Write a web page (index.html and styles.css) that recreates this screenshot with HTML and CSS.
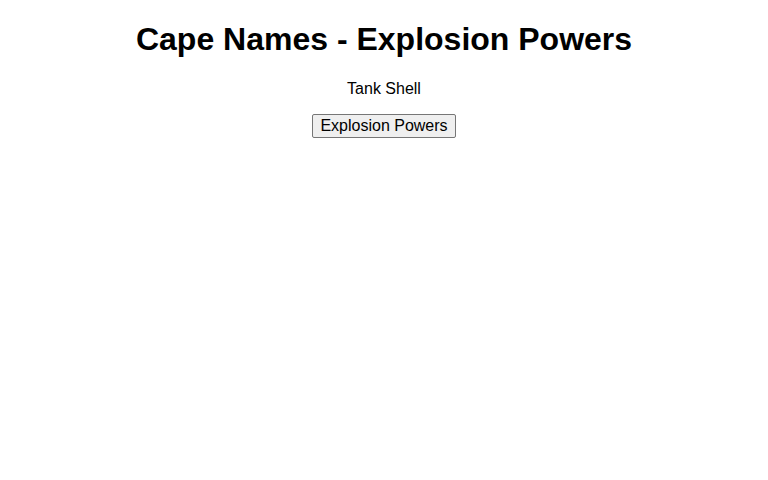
FILE: index.html
```html
<!DOCTYPE html>
<html>
<head>
<meta charset="utf-8">
<link rel="stylesheet" href="styles.css">
</head>
<body class="page">
  <h1 class="title">Cape Names - Explosion Powers</h1>
  <p class="name">Tank Shell</p>
  <button class="gen">Explosion Powers</button>
</body>
</html>
```
FILE: styles.css
```css
.page {
  margin: 0;
  font-family: "Liberation Sans", Arial, sans-serif;
  text-align: center;
  background: #fff;
  color: #000;
}
.title {
  font-size: 32px;
  font-weight: bold;
  margin: 21.44px 0;
}
.name {
  font-size: 16px;
  margin: 16px 0;
}
.gen {
  font-family: "Liberation Sans", Arial, sans-serif;
  font-size: 16px;
  line-height: 18px;
  padding: 2px 7px;
  background: #efefef;
  border: 1px solid #767676;
  border-radius: 2px;
  color: #000;
}
```
